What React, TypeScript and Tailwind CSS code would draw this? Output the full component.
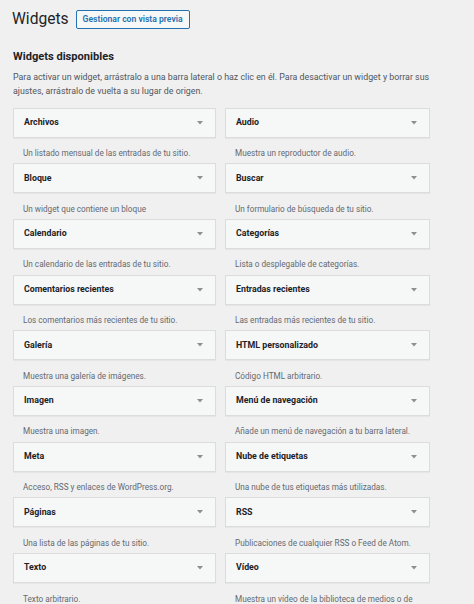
const widgets: [string, string][] = [
  ["Archivos", "Un listado mensual de las entradas de tu sitio."],
  ["Audio", "Muestra un reproductor de audio."],
  ["Bloque", "Un widget que contiene un bloque"],
  ["Buscar", "Un formulario de búsqueda de tu sitio."],
  ["Calendario", "Un calendario de las entradas de tu sitio."],
  ["Categorías", "Lista o desplegable de categorías."],
  ["Comentarios recientes", "Los comentarios más recientes de tu sitio."],
  ["Entradas recientes", "Las entradas más recientes de tu sitio."],
  ["Galería", "Muestra una galería de imágenes."],
  ["HTML personalizado", "Código HTML arbitrario."],
  ["Imagen", "Muestra una imagen."],
  ["Menú de navegación", "Añade un menú de navegación a tu barra lateral."],
  ["Meta", "Acceso, RSS y enlaces de WordPress.org."],
  ["Nube de etiquetas", "Una nube de tus etiquetas más utilizadas."],
  ["Páginas", "Una lista de las páginas de tu sitio."],
  ["RSS", "Publicaciones de cualquier RSS o Feed de Atom."],
  ["Texto", "Texto arbitrario."],
  ["Vídeo", "Muestra un vídeo de la biblioteca de medios o de"],
];

function Caret() {
  return (
    <svg width="6" height="4" viewBox="0 0 6 4" className="shrink-0">
      <path d="M0 0h6L3 3.6z" fill="#8c8f94" />
    </svg>
  );
}

function Widget({ title, desc }: { title: string; desc: string }) {
  return (
    <div className="flex flex-col">
      <div className="flex h-[30px] items-center justify-between border border-[#dcdcde] bg-[#f6f7f7] pl-[10px] pr-[12px] shadow-[0_1px_1px_rgba(0,0,0,0.04)]">
        <span className="text-[8.8px] font-bold text-[#1d2327]">{title}</span>
        <Caret />
      </div>
      <p className="h-[25.7px] overflow-hidden whitespace-nowrap pl-[10px] pt-[8.5px] text-[8.2px] leading-[14px] text-[#646970]">
        {desc}
      </p>
    </div>
  );
}

export default function App() {
  return (
    <div
      className="min-h-[604px] bg-[#f0f0f1] pl-[13px] pt-[7px]"
      style={{ fontFamily: "Roboto, 'Liberation Sans', sans-serif" }}
    >
      <div className="flex h-[24px] items-center gap-[7px]">
        <h1 className="-ml-[1px] text-[15.6px] leading-[24px] text-[#1d2327]">Widgets</h1>
        <button
          type="button"
          className="h-[19px] rounded-[2px] border border-[#2271b1] bg-[#f6f7f7] px-[6px] text-[8.6px] font-semibold text-[#2271b1]"
        >
          Gestionar con vista previa
        </button>
      </div>

      <h2 className="mt-[18px] text-[11.1px] font-bold leading-[16px] text-[#1d2327]">
        Widgets disponibles
      </h2>
      <p className="mt-[5px] w-[422px] text-[8.85px] leading-[14px] text-[#50575e]">
        Para activar un widget, arrástralo a una barra lateral o haz clic en él. Para desactivar un widget y borrar sus
        ajustes, arrástralo de vuelta a su lugar de origen.
      </p>

      <div className="mt-[9.5px] grid w-[417px] grid-cols-[203px_205px] gap-x-[9px]">
        {widgets.map(([t, d]) => (
          <Widget key={t} title={t} desc={d} />
        ))}
      </div>
    </div>
  );
}
